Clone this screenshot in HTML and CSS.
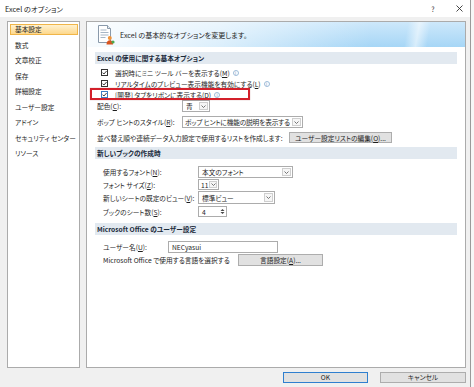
FILE: index.html
```html
<!DOCTYPE html>
<html lang="ja">
<head>
<meta charset="UTF-8">
<title>Excel のオプション</title>
<link rel="stylesheet" href="styles.css">
</head>
<body>
    <div class="window">
        <div class="titlebar">
            <span class="title">Excel のオプション</span>
            <span class="help">?</span>
            <span class="close">
                <svg width="7" height="7" viewBox="0 0 7 7"><path d="M0.5 0.5l6 6M6.5 0.5l-6 6" stroke="#333" stroke-width="0.9"/></svg>
            </span>
        </div>

        <div class="main">
            <ul class="nav">
                <li class="sel">基本設定</li>
                <li>数式</li>
                <li>文章校正</li>
                <li>保存</li>
                <li>詳細設定</li>
                <li>ユーザー設定</li>
                <li>アドイン</li>
                <li>セキュリティ センター</li>
                <li>リソース</li>
            </ul>

            <div class="content">
                <div class="banner">
                    <svg class="banner-icon" width="18" height="21" viewBox="0 0 18 21">
                        <path d="M1.5 1.5h9l3 3v14h-12z" fill="#fff" stroke="#8a9aab"/>
                        <path d="M10.5 1.5v3h3" fill="#e8eef4" stroke="#8a9aab"/>
                        <path d="M3.5 6h6M3.5 8.5h8M3.5 11h8M3.5 13.5h5" stroke="#a6b6c6"/>
                        <path d="M9.5 20.5c0-3 1.6-4.2 3.3-4.2s3.3 1.2 3.3 4.2z" fill="#d9541e"/>
                        <circle cx="12.8" cy="14" r="2" fill="#f0933a"/>
                        <circle cx="16" cy="18" r="1.6" fill="#4aa84e"/>
                    </svg>
                    <span>Excel の基本的なオプションを変更します。</span>
                </div>

                <div class="sections">
                    <div class="sec-head">Excel の使用に関する基本オプション</div>
                    <div class="opts">
                        <div class="row check-row first">
                            <svg class="cb" width="7" height="7" viewBox="0 0 7 7"><rect x="0.5" y="0.5" width="6" height="6" fill="#fff" stroke="#333"/><path d="M1.5 3.6l1.4 1.4 2.7-3" fill="none" stroke="#222" stroke-width="0.9"/></svg>
                            <span>選択時にミニ ツール バーを表示する(<u>M</u>)</span>
                            <span class="info">i</span>
                        </div>
                        <div class="row check-row">
                            <svg class="cb" width="7" height="7" viewBox="0 0 7 7"><rect x="0.5" y="0.5" width="6" height="6" fill="#fff" stroke="#333"/><path d="M1.5 3.6l1.4 1.4 2.7-3" fill="none" stroke="#222" stroke-width="0.9"/></svg>
                            <span>リアルタイムのプレビュー表示機能を有効にする(<u>L</u>)</span>
                            <span class="info">i</span>
                        </div>
                        <div class="row check-row marked">
                            <svg class="cb" width="7" height="7" viewBox="0 0 7 7"><rect x="0.5" y="0.5" width="6" height="6" fill="#fff" stroke="#3a7cc4"/><path d="M1.5 3.6l1.4 1.4 2.7-3" fill="none" stroke="#222" stroke-width="0.9"/></svg>
                            <span>[開発] タブをリボンに表示する(<u>D</u>)</span>
                            <span class="info">i</span>
                            <span class="redbox"></span>
                        </div>
                        <div class="row flush">
                            <span class="lbl lbl-basic">配色(<u>C</u>):</span>
                            <span class="select w-color"><span class="val">青</span><span class="arr"><svg width="5" height="3" viewBox="0 0 5 3"><path d="M0.5 0.5l2 2 2-2" fill="none" stroke="#555" stroke-width="0.8"/></svg></span></span>
                        </div>
                        <div class="row">
                            <span class="lbl lbl-basic">ポップ ヒントのスタイル(<u>R</u>):</span>
                            <span class="select w-pop"><span class="val">ポップ ヒントに機能の説明を表示する</span><span class="arr"><svg width="5" height="3" viewBox="0 0 5 3"><path d="M0.5 0.5l2 2 2-2" fill="none" stroke="#555" stroke-width="0.8"/></svg></span></span>
                        </div>
                        <div class="row short">
                            <span class="lbl lbl-sort">並べ替え順や連続データ入力設定で使用するリストを作成します:</span>
                            <button class="btn w-sort">ユーザー設定リストの編集(<u>O</u>)...</button>
                        </div>
                    </div>

                    <div class="sec-head gap4">新しいブックの作成時</div>
                    <div class="opts opts-in">
                        <div class="row gap7">
                            <span class="lbl lbl-book">使用するフォント(<u>N</u>):</span>
                            <span class="select w-font"><span class="val">本文のフォント</span><span class="arr"><svg width="5" height="3" viewBox="0 0 5 3"><path d="M0.5 0.5l2 2 2-2" fill="none" stroke="#555" stroke-width="0.8"/></svg></span></span>
                        </div>
                        <div class="row short gap1">
                            <span class="lbl lbl-book">フォント サイズ(<u>Z</u>):</span>
                            <span class="select w-size"><span class="val">11</span><span class="arr"><svg width="5" height="3" viewBox="0 0 5 3"><path d="M0.5 0.5l2 2 2-2" fill="none" stroke="#555" stroke-width="0.8"/></svg></span></span>
                        </div>
                        <div class="row tall gap1">
                            <span class="lbl lbl-book">新しいシートの既定のビュー(<u>V</u>):</span>
                            <span class="select w-view"><span class="val">標準ビュー</span><span class="arr"><svg width="5" height="3" viewBox="0 0 5 3"><path d="M0.5 0.5l2 2 2-2" fill="none" stroke="#555" stroke-width="0.8"/></svg></span></span>
                        </div>
                        <div class="row short gap2">
                            <span class="lbl lbl-book">ブックのシート数(<u>S</u>):</span>
                            <span class="select w-spin"><span class="val">4</span><span class="spin"><svg width="5" height="7" viewBox="0 0 5 7"><path d="M0.5 3l2-2 2 2z M0.5 4l2 2 2-2z" fill="#444"/></svg></span></span>
                        </div>
                    </div>

                    <div class="sec-head gap6">Microsoft Office のユーザー設定</div>
                    <div class="opts opts-in">
                        <div class="row gap6">
                            <span class="lbl lbl-user">ユーザー名(<u>U</u>):</span>
                            <span class="input w-user">NECyasui</span>
                        </div>
                        <div class="row gap1">
                            <span class="lbl lbl-lang">Microsoft Office で使用する言語を選択する</span>
                            <button class="btn w-lang">言語設定(<u>A</u>)...</button>
                        </div>
                    </div>
                </div>
            </div>
        </div>

        <div class="footer">
            <button class="btn ok">OK</button>
            <button class="btn cancel">キャンセル</button>
        </div>
    </div>
</body>
</html>
```

FILE: styles.css
```css
* {
    box-sizing: border-box;
}
body {
    margin: 0;
    background: #f7f7f7;
    font-family: "Noto Sans CJK JP", "Noto Sans", sans-serif;
    font-size: 6.7px;
    color: #1e1e1e;
    font-feature-settings: "palt";
}
.window {
    width: 471px;
    height: 387px;
    background: #f0f0f0;
    border-right: 1px solid #9a9a9a;
    display: flex;
    flex-direction: column;
}
.titlebar {
    height: 17px;
    flex: none;
    background: #fff;
    display: flex;
    align-items: center;
    padding: 0 6px 0 5px;
}
.title {
    flex: 1;
    font-size: 7.3px;
    color: #222;
}
.help {
    width: 10px;
    text-align: center;
    margin-right: 16px;
    font-size: 7px;
    color: #333;
}
.close {
    width: 10px;
    display: flex;
    justify-content: center;
}

.main {
    display: flex;
    gap: 6px;
    padding: 4px 4px 0 7px;
    height: 351px;
    flex: none;
}
.nav {
    width: 73px;
    margin: 0;
    padding: 2px 1px 0 2px;
    list-style: none;
    background: #fff;
    border: 1px solid #ababab;
}
.nav li {
    height: 11px;
    line-height: 11px;
    padding-left: 5px;
    margin-bottom: 4.5px;
    white-space: nowrap;
}
.nav li.sel {
    background: linear-gradient(#fff1cf, #fdd88c);
    border: 1px solid #f0b548;
    line-height: 9px;
    padding-left: 4px;
}

.content {
    width: 380px;
    background: #fff;
    border: 1px solid #ababab;
}
.banner {
    height: 25px;
    display: flex;
    align-items: center;
    padding-left: 10px;
    background:
        linear-gradient(100deg, transparent 84%, rgba(255,255,255,0.55) 87%, transparent 90%),
        linear-gradient(to right, rgba(255,255,255,0.92) 0%, rgba(255,255,255,0.6) 35%, rgba(255,255,255,0) 75%),
        linear-gradient(#cde8fb, #a6d6f6);
    font-size: 7.1px;
}
.banner-icon {
    margin-right: 5px;
}

.sections {
    padding: 0 8px;
    margin-top: 5px;
}
.sec-head {
    height: 12px;
    line-height: 12px;
    padding-left: 2px;
    background: #e2e9f0;
    font-weight: bold;
    color: #1a2a3a;
}
.opts {
    padding-left: 2px;
}
.opts-in {
    padding-left: 8px;
}

.row {
    display: flex;
    align-items: center;
    height: 12px;
    margin-top: 4px;
    white-space: nowrap;
}
.row.short { height: 11px; }
.row.tall { height: 13px; }
.row.flush { margin-top: 0; }
.gap1 { margin-top: 1px !important; }
.gap2 { margin-top: 2px !important; }
.gap4 { margin-top: 4px; }
.gap6 { margin-top: 6px !important; }
.gap7 { margin-top: 7px !important; }

.check-row {
    height: 11px;
    margin-top: 0;
    padding-left: 4px;
}
.check-row.first {
    margin-top: 3px;
}
.marked {
    position: relative;
}
.cb {
    margin-right: 7px;
    flex: none;
}
.info {
    width: 6px;
    height: 6px;
    margin-left: 3px;
    border: 1px solid #9cbbd9;
    border-radius: 50%;
    font-size: 4px;
    line-height: 4px;
    text-align: center;
    color: #6f98c2;
}
.redbox {
    position: absolute;
    left: -7px;
    top: -1px;
    width: 160px;
    height: 12px;
    border: 2px solid #d3202a;
    box-shadow: 0 0 1px rgba(120,0,0,0.4);
}

.lbl { flex: none; }
.lbl-basic { width: 85px; }
.lbl-sort { width: 192px; }
.lbl-book { width: 95px; }
.lbl-user { width: 65px; }
.lbl-lang { width: 135px; }

.select, .input {
    display: flex;
    align-items: center;
    height: 100%;
    background: #fff;
    border: 1px solid #acacac;
}
.select .val {
    flex: 1;
    padding-left: 3px;
    overflow: hidden;
}
.w-pop .val {
    padding-left: 2px;
    letter-spacing: -0.15px;
}
.arr {
    width: 9px;
    flex: none;
    height: calc(100% - 2px);
    margin-right: 1px;
    border: 1px solid #cfcfcf;
    background: #f6f6f6;
    display: flex;
    align-items: center;
    justify-content: center;
}
.w-size .arr {
    width: 8px;
}
.w-size .val {
    padding-left: 2px;
}
.spin {
    width: 8px;
    height: 100%;
    display: flex;
    align-items: center;
    justify-content: center;
}
.input {
    padding-left: 3px;
}
.w-color { width: 28px; }
.w-pop { width: 121px; }
.w-font { width: 95px; }
.w-size { width: 21px; }
.w-view { width: 77px; }
.w-spin { width: 29px; }
.w-user { width: 110px; }

.btn {
    height: 100%;
    padding: 0;
    font-family: inherit;
    font-size: 6.7px;
    color: #1e1e1e;
    background: #e1e1e1;
    border: 1px solid #adadad;
    font-feature-settings: "palt";
}
.w-sort { width: 103px; }
.w-lang { width: 85px; }

.footer {
    display: flex;
    justify-content: flex-end;
    gap: 12px;
    padding: 4px 4px 0 0;
}
.footer .btn {
    height: 11px;
    line-height: 9px;
}
.ok {
    width: 85px;
    border-color: #2f7fcf;
}
.cancel {
    width: 86px;
}
```
